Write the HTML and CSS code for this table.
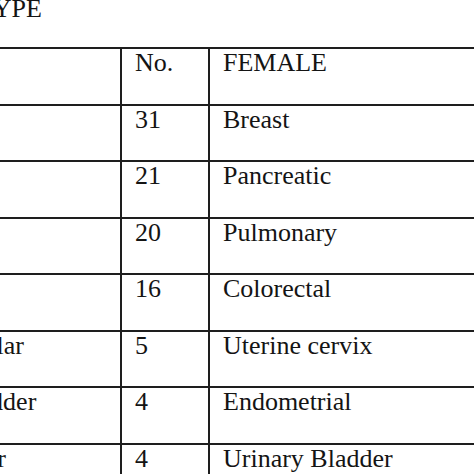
FILE: index.html
```html
<!DOCTYPE html>
<html>
<head>
<meta charset="utf-8">
<link rel="stylesheet" href="styles.css">
</head>
<body>
<div class="page">
  <div class="caption">TUMOR TYPE</div>
  <table class="grid">
    <colgroup>
      <col class="c1"><col class="c2"><col class="c3"><col class="c4">
    </colgroup>
    <tr class="head"><td class="first">MALE</td><td>No.</td><td>FEMALE</td><td>No.</td></tr>
    <tr><td class="first">Prostate</td><td>31</td><td>Breast</td><td>30</td></tr>
    <tr><td class="first">Colorectal</td><td>21</td><td>Pancreatic</td><td>12</td></tr>
    <tr><td class="first">Pulmonary</td><td>20</td><td>Pulmonary</td><td>10</td></tr>
    <tr><td class="first">Pancreatic</td><td>16</td><td>Colorectal</td><td>9</td></tr>
    <tr><td class="first">Hepatocellular</td><td>5</td><td>Uterine cervix</td><td>6</td></tr>
    <tr><td class="first">Urinary bladder</td><td>4</td><td>Endometrial</td><td>4</td></tr>
    <tr><td class="first">Renal cancer</td><td>4</td><td>Urinary Bladder</td><td>2</td></tr>
  </table>
</div>
</body>
</html>
```

FILE: styles.css
```css
html, body {
  margin: 0;
  padding: 0;
  background: #ffffff;
  overflow: hidden;
  width: 474px;
  height: 474px;
}

.page {
  margin-left: -152px;
  font-family: "Liberation Serif", "Times New Roman", serif;
  font-size: 26px;
  color: #141414;
}

.caption {
  line-height: 30px;
  margin-top: -6px;
  margin-left: 29px;
}

.grid {
  margin-top: 23px;
  border-collapse: collapse;
  table-layout: fixed;
  width: 800px;
}

.c1 { width: 272px; }
.c2 { width: 88px; }
.c3 { width: 290px; }
.c4 { width: 150px; }

.grid td {
  border: 2px solid #1e1e1e;
  padding: 0 13px 0 13px;
  height: 54px;
  vertical-align: top;
  line-height: 28px;
  white-space: nowrap;
  box-sizing: border-box;
}

.grid td.first {
  padding-left: 21px;
}

.grid tr {
  height: 56.5px;
}
```
